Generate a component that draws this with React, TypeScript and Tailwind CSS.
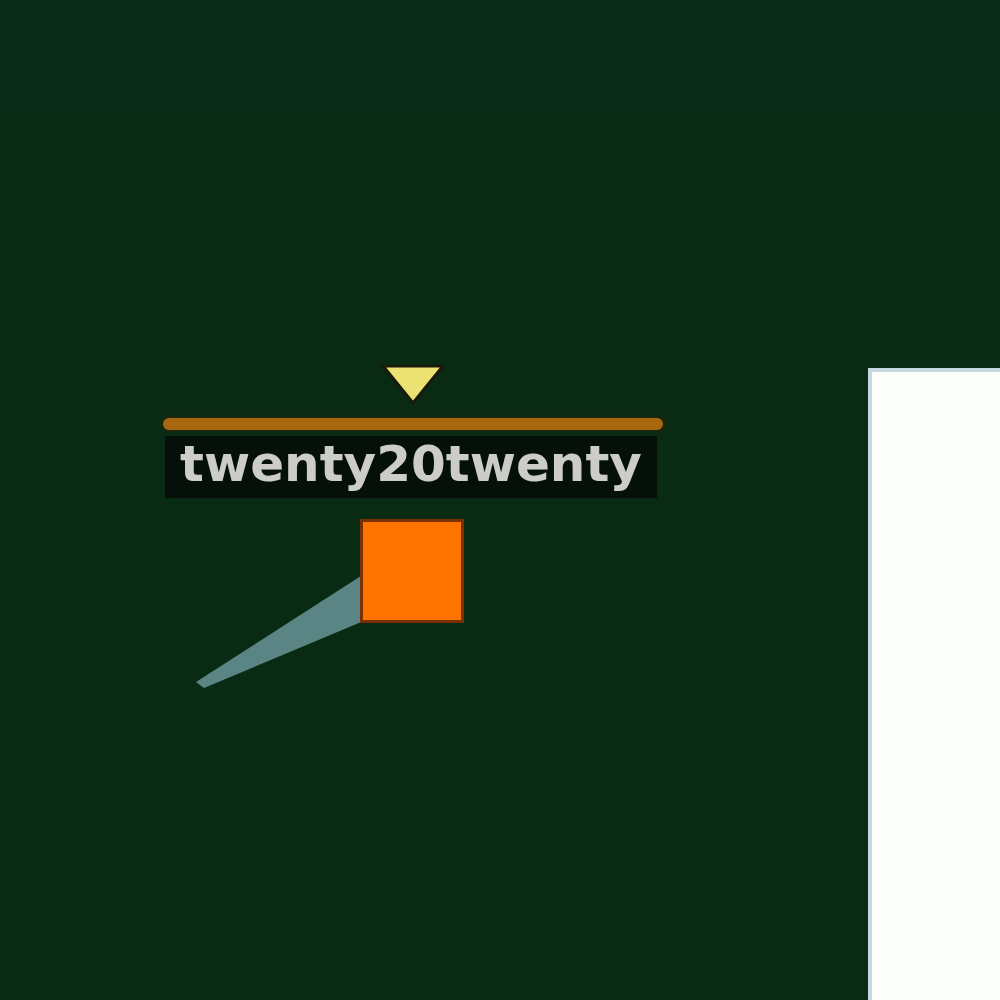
import React from 'react';

function Marker() {
  return (
    <svg width="68" height="46" viewBox="0 0 68 46" className="absolute left-[379px] top-[361px]">
      <polygon points="4,5 64,5 34,42" fill="#ece274" stroke="#1a1a0a" strokeWidth="3" strokeLinejoin="round" />
    </svg>
  );
}

function Tether() {
  return (
    <svg width="200" height="140" viewBox="0 0 200 140" className="absolute left-[190px] top-[560px]">
      <polygon points="6,122 14,128 176,60 174,14" fill="#5a8584" />
    </svg>
  );
}

export default function App() {
  return (
    <div className="relative w-[1000px] h-[1000px] overflow-hidden bg-[#0a2b13]">
      <div className="absolute left-0 top-0 w-full h-[110px] bg-[#0a2a18]" />

      <Marker />

      {/* name plate */}
      <div className="absolute left-[163px] top-[418px] w-[500px] h-[12px] rounded-full bg-[#a8660e] shadow-[0_0_4px_#3a2000]" />
      <div className="absolute left-[165px] top-[436px] w-[492px] h-[62px] bg-[#05100a] flex items-center justify-center">
        <span className="font-['DejaVu_Sans',sans-serif] font-bold text-[50px] leading-none text-[#cccdc6] pb-[6px]">
          twenty20twenty
        </span>
      </div>

      <Tether />

      {/* unit */}
      <div className="absolute left-[360px] top-[519px] w-[104px] h-[104px] bg-[#ff7400] border-[3px] border-[#7a3000]" />

      {/* side panel */}
      <div className="absolute left-[868px] top-[368px] w-[132px] h-[632px] bg-[#fdfffb] border-l-[4px] border-t-[4px] border-[#c8d8e0]" />
    </div>
  );
}
